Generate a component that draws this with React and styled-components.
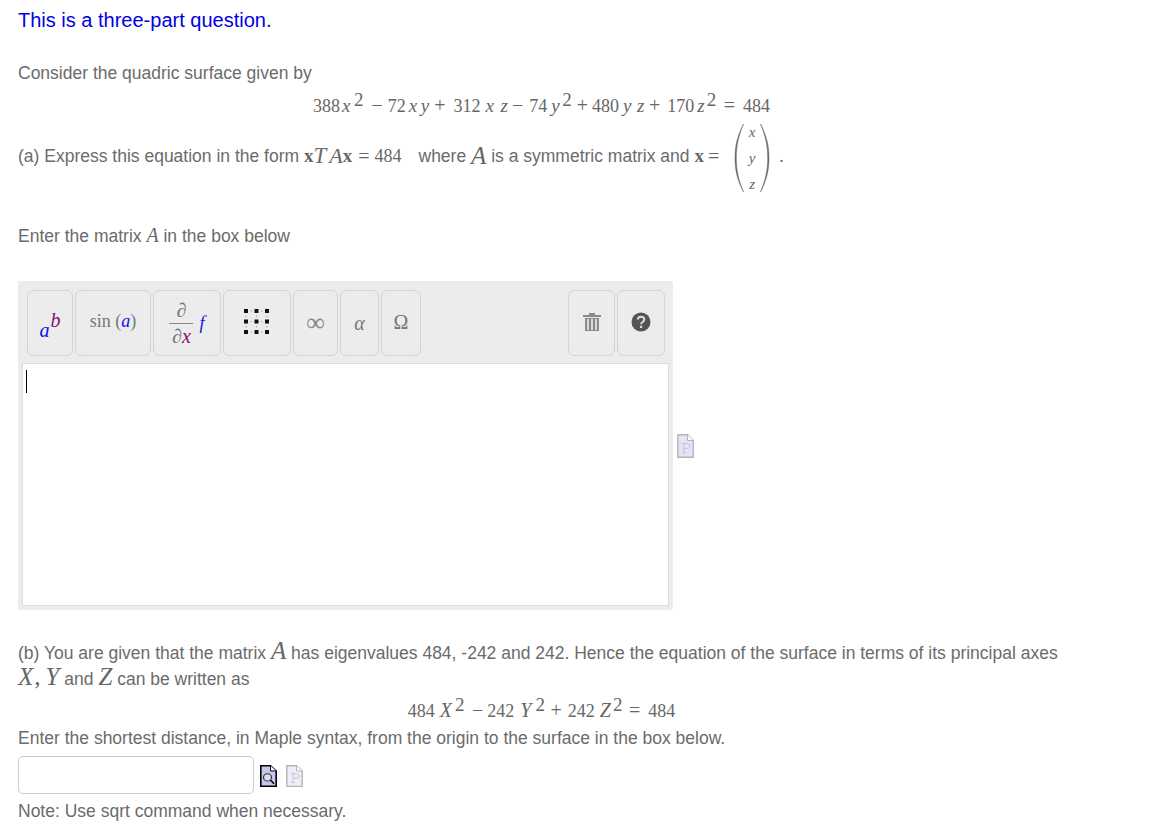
import React from "react";
import styled, { createGlobalStyle } from "styled-components";

const Global = createGlobalStyle`
  html, body { margin: 0; padding: 0; background: #fff; }
  body { font-family: "Liberation Sans", Arial, sans-serif; color: #6b6b6b; font-size: 17.5px; }
`;
const Page = styled.div`
  width: 1047px; padding-left: 18px; height: 824px; overflow: hidden;
`;
const Intro = styled.div`
  color: #0000e6; font-size: 20px; line-height: 24px; padding-top: 8px;
`;
const Text = styled.div`
  height: ${p => p.$h || 24}px; line-height: 24px; margin-top: ${p => p.$mt || 0}px; white-space: nowrap;
`;
const MathText = styled.span`
  font-family: "Liberation Serif", "DejaVu Serif", serif; font-size: ${p => p.$size || 18}px; color: #666; line-height: 0;
  font-style: ${p => p.$i ? "italic" : "normal"}; font-weight: ${p => p.$b ? 700 : 400};
  margin: 0 ${p => p.$mr || 0}px 0 ${p => p.$ml || 0}px;
`;
const Equation = styled.div`
  text-align: center; height: 24px; line-height: 24px; margin-top: ${p => p.$mt || 0}px; white-space: nowrap;
  font-family: "Liberation Serif", serif; font-size: 18px; color: #666;
`;
const Num = styled.span` margin-left: ${p => p.$l || 0}px; `;
const Sup = styled.sup`
  font-family: "Liberation Serif", serif; font-size: ${p => p.$size || 19}px; line-height: 0; vertical-align: 6px;
  font-style: ${p => p.$i ? "italic" : "normal"}; margin-left: ${p => p.$l || 0}px;
`;
const Op = styled.span` font-size: 20px; margin-left: ${p => p.$l || 0}px; `;
const Var = styled.span`
  font-style: italic; font-size: ${p => p.$size || 19}px; margin-left: ${p => p.$l || 0}px;
`;
const MatrixLine = styled.div`
  display: flex; align-items: center; height: 72px; margin-top: ${p => p.$mt || 0}px; white-space: nowrap;
`;
const Matrix = styled.span`
  display: inline-flex; align-items: center; margin: 4px 8px 0 14px; height: 72px;
`;
const MatrixCol = styled.span`
  display: flex; flex-direction: column; align-items: center; width: 16px;
  font-family: "Liberation Serif", serif; font-style: italic; font-size: 15px; line-height: 26px; color: #666;
`;
const Widget = styled.div`
  display: flex; align-items: center; gap: 4px; margin-top: ${p => p.$mt || 0}px;
`;
const EditorFrame = styled.div`
  width: 655px; height: 329px; box-sizing: border-box; background: #ececec; border-radius: 2px; padding: 0 4px 4px;
  display: flex; flex-direction: column;
`;
const Toolbar = styled.div`
  height: 82px; flex: none; box-sizing: border-box; padding: 9px 4px 0 5px; display: flex; gap: 2px;
`;
const ToolButton = styled.div`
  width: ${p => p.$w}px; height: 66px; box-sizing: border-box; flex: none; margin-left: ${p => p.$push ? "auto" : 0};
  padding-bottom: ${p => p.$pb || 0}px;
  border: 1px solid #d4d4d4; border-radius: 6px; background: #ececec;
  display: flex; align-items: center; justify-content: center;
  font-family: "Liberation Serif", serif; font-size: ${p => p.$size || 18}px; color: #777;
`;
const Editor = styled.div`
  flex: 1; background: #fff; border: 1px solid #dcdcdc; padding: 6px 0 0 3px;
`;
const Caret = styled.div` width: 1px; height: 23px; background: #000; `;
const Purple = styled.span` color: #8a0a80; font-style: italic; `;
const Blue = styled.span` color: #1010e8; font-style: italic; `;
const AB = styled.span`
  display: flex; align-items: center; font-size: 20px; line-height: 20px;
  & > :first-child { transform: translateY(7px); }
  & > :last-child { transform: translateY(-3px); margin-left: 1px; }
`;
const Frac = styled.span`
  display: inline-flex; flex-direction: column; align-items: center; font-size: 20px; line-height: 20px; margin-right: 6px;
`;
const FracBar = styled.span` width: 24px; height: 1px; background: #888; margin: 3px 0 2px; `;
const AnswerRow = styled.div`
  display: flex; align-items: center; margin-top: 6px; height: 38px;
`;
const Input = styled.div`
  width: 236px; height: 38px; box-sizing: border-box; border: 1px solid #ccc; border-radius: 5px; background: #fff; margin-right: 6px;
`;
const IconGap = styled.span` display: inline-flex; margin: 2px ${p => p.$mr || 0}px 0 0; `;
const Big = styled.span` font-size: ${p => p.$size || 26}px; line-height: 1; color: #888; `;

const Doc = ({ dim, preview, h = 24 }) => (
  <svg width="17" height={h} viewBox="0 0 17 24" preserveAspectRatio="none">
    <path d="M.8.8H10.5L16.2 6.5V23.2H.8Z" fill={preview ? "#c4c6f2" : dim ? "#eeeef8" : "#e4e4f8"} stroke={preview ? "#000" : "#b4b4b4"} strokeWidth={preview ? 1.6 : 1.4} />
    <path d="M10.5.8V6.5H16.2" fill="#fff" stroke={preview ? "#000" : "#b4b4b4"} strokeWidth="1" />
    {preview ? (
      <>
        <circle cx="7.5" cy="13.5" r="4" fill="#dde" stroke="#333" strokeWidth="1.2" />
        <path d="M10.5 16.5L14 20.5" stroke="#000" strokeWidth="1.6" />
      </>
    ) : (
      <path d="M5 9.5H10.5A2 2 0 0 1 10.5 14.5H7M7 9.5V19M5 19H9" fill="none" stroke="#c4c4d4" strokeWidth="1" />
    )}
  </svg>
);
const Grid = () => (
  <svg width="26" height="26" viewBox="0 0 26 26">
    {[2, 12.5, 23].flatMap(y => [2, 12.5, 23].map(x => <rect key={x + "-" + y} x={x - 2} y={y - 2} width="4" height="4" fill="#111" />))}
    {[7.3, 17.8].flatMap(y => [2, 12.5, 23].map(x => <rect key={"v" + x + y} x={x - .5} y={y - .5} width="1" height="1" fill="#888" />))}
    {[7.3, 17.8].flatMap(x => [2, 12.5, 23].map(y => <rect key={"h" + x + y} x={x - .5} y={y - .5} width="1" height="1" fill="#888" />))}
  </svg>
);
const Trash = () => (
  <svg width="18" height="20" viewBox="0 0 18 20">
    <path d="M0 3H18V5H0ZM6 1H12V3H6Z" fill="#8a8a8a" />
    <path d="M2 6H16V19H2Z" fill="#8a8a8a" />
    <path d="M5 7V18M9 7V18M13 7V18" stroke="#ececec" strokeWidth="1.6" />
  </svg>
);
const Help = () => (
  <svg width="20" height="20" viewBox="0 0 20 20">
    <circle cx="10" cy="10" r="9.5" fill="#555" />
    <path d="M6.8 7.6C6.8 3.8 13.3 3.8 13.3 7.6C13.3 10 10.1 10 10.1 12.2" fill="none" stroke="#ddd" strokeWidth="2" />
    <rect x="9" y="13.8" width="2.2" height="2.2" fill="#ddd" />
  </svg>
);
const Paren = ({ right }) => (
  <svg width="11" height="70" viewBox="0 0 11 70" style={right ? { transform: "scaleX(-1)" } : undefined}>
    <path d="M10.5 1C3.8 14 2 24 2 35C2 46 3.8 56 10.5 69C5 56 3.3 46 3.3 35C3.3 24 5 14 10.5 1Z" fill="#666" stroke="#666" strokeWidth=".5" />
  </svg>
);

export default function App() {
  return (
    <Page>
      <Global />
      <Intro>This is a three-part question.</Intro>
      <Text $mt={29}>Consider the quadric surface given by</Text>
      <Equation $mt={8}>
        <Num>388</Num><Var $l={2}>x</Var><Sup $l={3.5}>2</Sup><Op $l={8}>−</Op><Num $l={5}>72</Num>
        <Var $l={3}>x</Var><Var $l={3.6}>y</Var><Op $l={5}>+</Op><Num $l={8}>312</Num>
        <Var $l={5}>x</Var><Var $l={6.6}>z</Var><Op $l={4}>−</Op><Num $l={6}>74</Num>
        <Var $l={4}>y</Var><Sup $l={2.5}>2</Sup><Op $l={5}>+</Op><Num $l={4}>480</Num>
        <Var $l={4}>y</Var><Var $l={5.6}>z</Var><Op $l={4.6}>+</Op><Num $l={7}>170</Num>
        <Var $l={3}>z</Var><Sup $l={2}>2</Sup><Op $l={7.5}>=</Op><Num $l={8}>484</Num>
      </Equation>
      <MatrixLine $mt={3}>
        (a) Express this equation in the form&nbsp;
        <MathText $b $size={19}>x</MathText><Sup $i $size={23}>T</Sup>
        <MathText $i $ml={3} $size={22}>A</MathText><MathText $b $size={19}>x</MathText>
        <MathText $ml={6} $size={20}>=</MathText><MathText $ml={5} $mr={17}>484</MathText>
        where&nbsp;<MathText $i $size={25}>A</MathText>&nbsp;is a symmetric matrix and&nbsp;
        <MathText $b $size={19}>x</MathText><MathText $ml={4} $size={20}>=</MathText>
        <Matrix>
          <Paren />
          <MatrixCol><span>x</span><span>y</span><span>z</span></MatrixCol>
          <Paren right />
        </Matrix>
        <MathText>.</MathText>
      </MatrixLine>
      <Text $mt={32}>Enter the matrix <MathText $i $size={20}>A</MathText> in the box below</Text>
      <Widget $mt={33}>
        <EditorFrame>
          <Toolbar>
            <ToolButton $w={46}><AB><Blue>a</Blue><Purple>b</Purple></AB></ToolButton>
            <ToolButton $w={76} $pb={3}>sin&nbsp;(<Blue>a</Blue>)</ToolButton>
            <ToolButton $w={68}>
              <Frac><span>∂</span><FracBar /><span>∂<Purple>x</Purple></span></Frac>
              <Blue>f</Blue>
            </ToolButton>
            <ToolButton $w={68} $pb={2}><Grid /></ToolButton>
            <ToolButton $w={45}><Big>∞</Big></ToolButton>
            <ToolButton $w={39} $size={20}><em>α</em></ToolButton>
            <ToolButton $w={40} $size={20} $pb={2}>Ω</ToolButton>
            <ToolButton $w={47} $push $pb={2}><Trash /></ToolButton>
            <ToolButton $w={48} $pb={2}><Help /></ToolButton>
          </Toolbar>
          <Editor><Caret /></Editor>
        </EditorFrame>
        <Doc />
      </Widget>
      <Text $mt={31}>(b) You are given that the matrix <MathText $i $size={25}>A</MathText> has eigenvalues 484, -242 and 242. Hence the equation of the surface in terms of its principal axes</Text>
      <Text $mt={2}>
        <MathText $i $size={25}>X</MathText><MathText $size={25} $ml={1}>,</MathText> <MathText $i $size={25} $mr={5}>Y</MathText>and <MathText $i $size={25}>Z</MathText> can be written as
      </Text>
      <Equation $mt={7}>
        <Num>484</Num><Var $size={20} $l={5}>X</Var><Sup $l={3}>2</Sup><Op $l={7.5}>−</Op><Num $l={4}>242</Num>
        <Var $size={20} $l={6}>Y</Var><Sup $l={4}>2</Sup><Op $l={5.5}>+</Op><Num $l={6}>242</Num>
        <Var $size={20} $l={5}>Z</Var><Sup $l={2}>2</Sup><Op $l={6.5}>=</Op><Num $l={8}>484</Num>
      </Equation>
      <Text $mt={4}>Enter the shortest distance, in Maple syntax, from the origin to the surface in the box below.</Text>
      <AnswerRow>
        <Input />
        <IconGap $mr={9}><Doc preview h={22} /></IconGap>
        <IconGap><Doc dim h={22} /></IconGap>
      </AnswerRow>
      <Text $mt={5}>Note: Use sqrt command when necessary.</Text>
    </Page>
  );
}
